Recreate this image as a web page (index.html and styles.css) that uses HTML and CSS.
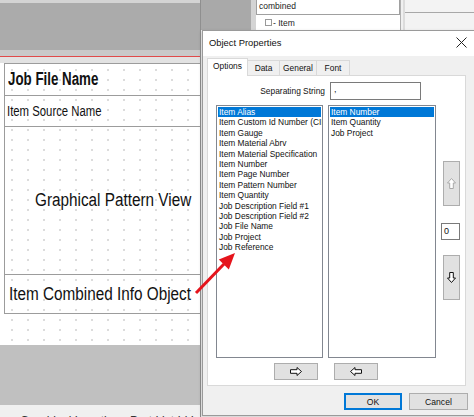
FILE: index.html
```html
<!DOCTYPE html>
<html>
<head>
<meta charset="utf-8">
<link rel="stylesheet" href="styles.css">
</head>
<body>
<div class="screen">
  <div class="canvas">
    <div class="top-line"></div>
    <div class="top-band"></div>
    <div class="band-light"></div>
    <div class="red-line"></div>
    <div class="band-under"></div>
    <div class="page">
      <div class="report">
        <div class="row row-1"><span class="narrow bold">Job File Name</span></div>
        <div class="row row-2"><span class="narrow small">Item Source Name</span></div>
        <div class="row row-3"><span class="narrow big">Graphical Pattern View</span></div>
        <div class="row row-4"><span class="narrow big">Item Combined Info Object</span></div>
      </div>
    </div>
    <div class="bottom-gray"></div>
    <div class="status"><span class="status-text">Graphical Location&nbsp;&nbsp; Part List Id Label</span></div>
  </div>
  <div class="side">
    <div class="side-top">
      <div class="gap-strip"></div>
      <div class="tree">
        <div class="tree-box">combined</div>
        <div class="tree-node"><span class="minus-box"></span><span>- Item</span></div>
      </div>
      <div class="right-panel"><div class="rp-line"></div></div>
    </div>
  </div>

  <div class="dialog">
    <div class="titlebar">
      <span class="title">Object Properties</span>
      <svg class="close" width="11" height="11" viewBox="0 0 11 11"><path d="M0.5 0.5 L10.5 10.5 M10.5 0.5 L0.5 10.5" stroke="#222" stroke-width="1"/></svg>
    </div>
    <div class="tabs">
      <div class="tab active">Options</div>
      <div class="tab">Data</div>
      <div class="tab">General</div>
      <div class="tab">Font</div>
    </div>
    <div class="panel">
      <div class="sep-row">
        <span class="sep-label">Separating String</span>
        <div class="sep-input">,</div>
      </div>
      <div class="lists">
        <div class="listbox">
          <div class="item sel">Item Alias</div>
          <div class="item">Item Custom Id Number (CID)</div>
          <div class="item">Item Gauge</div>
          <div class="item">Item Material Abrv</div>
          <div class="item">Item Material Specification</div>
          <div class="item">Item Number</div>
          <div class="item">Item Page Number</div>
          <div class="item">Item Pattern Number</div>
          <div class="item">Item Quantity</div>
          <div class="item">Job Description Field #1</div>
          <div class="item">Job Description Field #2</div>
          <div class="item">Job File Name</div>
          <div class="item">Job Project</div>
          <div class="item">Job Reference</div>
        </div>
        <div class="listbox right">
          <div class="item sel">Item Number</div>
          <div class="item">Item Quantity</div>
          <div class="item">Job Project</div>
        </div>
        <div class="order">
          <div class="btn tall"><svg width="9" height="11" viewBox="0 0 9 11"><path d="M4.5 0.5 L8.5 5 H6.3 V10.5 H2.7 V5 H0.5 Z" fill="#fff" stroke="#a8a8a8" stroke-width="1"/></svg></div>
          <div class="num">0</div>
          <div class="btn tall"><svg width="9" height="11" viewBox="0 0 9 11"><path d="M4.5 10.5 L8.5 6 H6.3 V0.5 H2.7 V6 H0.5 Z" fill="#fff" stroke="#111" stroke-width="1"/></svg></div>
        </div>
      </div>
      <div class="move-row">
        <div class="btn move"><svg width="12" height="9" viewBox="0 0 12 9"><path d="M11.5 4.5 L7 0.5 V2.7 H0.5 V6.3 H7 V8.5 Z" fill="#fff" stroke="#111" stroke-width="1"/></svg></div>
        <div class="btn move"><svg width="12" height="9" viewBox="0 0 12 9"><path d="M0.5 4.5 L5 0.5 V2.7 H11.5 V6.3 H5 V8.5 Z" fill="#fff" stroke="#111" stroke-width="1"/></svg></div>
      </div>
    </div>
    <div class="footer">
      <div class="btn dlg ok">OK</div>
      <div class="btn dlg">Cancel</div>
    </div>
  </div>

  <svg class="pointer" width="474" height="417" viewBox="0 0 474 417">
    <line x1="196" y1="293" x2="224" y2="264" stroke="#e5141c" stroke-width="3"/>
    <polygon points="235,253 228.8,269.4 218.8,259.6" fill="#e5141c"/>
  </svg>
</div>
</body>
</html>
```
FILE: styles.css
```css
html, body {
  margin: 0;
  padding: 0;
}
body {
  width: 474px;
  height: 417px;
  overflow: hidden;
  background: #f0f0f0;
  font-family: "Liberation Sans", Arial, sans-serif;
}
.screen {
  position: relative;
  width: 474px;
  height: 417px;
  display: flex;
  overflow: hidden;
}
.canvas {
  width: 200px;
  flex: none;
  display: flex;
  flex-direction: column;
  border-right: 1px solid #8f8f8f;
}
.top-line { height: 3px; background: #d4d4d4; }
.top-band { height: 47px; background: #ababab; }
.band-light { height: 6px; background: #c9c9c9; }
.red-line { height: 1px; background: #e04a4a; }
.band-under { height: 6px; background: #e2e2e2; }
.page {
  height: 282px;
  background-color: #fff;
  background-image: radial-gradient(circle, #c8c8c8 0.6px, transparent 0.9px);
  background-size: 16px 10px;
  background-position: 4px 2px;
  padding-left: 4px;
}
.report {
  border-left: 1px solid #9c9c9c;
  border-top: 1px solid #9c9c9c;
}
.row {
  border-bottom: 1px solid #9c9c9c;
  display: flex;
  align-items: center;
  color: #111;
  white-space: nowrap;
}
.row-1 { height: 31px; padding-left: 3px; }
.row-2 { height: 30px; padding-left: 2px; }
.row-3 { height: 147px; padding-left: 30px; }
.row-4 { height: 38px; padding-left: 4px; }
.narrow {
  display: inline-block;
  transform-origin: 0 50%;
  transform: scaleX(0.85);
}
.bold { font-weight: bold; font-size: 18px; transform: scaleX(0.74); }
.small { font-size: 14px; transform: scaleX(0.81); }
.big { font-size: 18px; }
.bottom-gray {
  height: 60px;
  background: #c0c0c0;
}
.status {
  height: 12px;
  background: #f0f0f0;
  overflow: hidden;
  position: relative;
}
.status-text {
  display: block;
  margin-top: 9px;
  padding-left: 20px;
  font-size: 12px;
  color: #333;
  white-space: nowrap;
}
.side {
  flex: 1;
  display: flex;
  flex-direction: column;
}
.side-top {
  display: flex;
  height: 30px;
}
.gap-strip {
  width: 50px;
  background: #a9a9a9;
  border-right: 5px solid #d4d4d4;
}
.tree {
  width: 144px;
  background: #fff;
  border-right: 1px solid #b0b0b0;
  font-size: 8.5px;
  color: #222;
}
.tree-box {
  height: 15px;
  border: 1px solid #a0a0a0;
  border-top: none;
  padding-left: 2px;
  line-height: 13px;
  box-sizing: border-box;
}
.tree-node {
  display: flex;
  align-items: center;
  padding-left: 9px;
  height: 15px;
}
.minus-box {
  width: 5px;
  height: 5px;
  border: 1px solid #999;
  margin-right: 1px;
}
.right-panel {
  flex: 1;
  border-left: 2px solid #dcdcdc;
  background: #f3f3f3;
  margin-left: 2px;
}
.rp-line {
  margin-top: 12px;
  border-top: 1px solid #a8a8a8;
}

/* dialog */
.dialog {
  position: absolute;
  left: 202px;
  top: 30px;
  width: 280px;
  height: 386px;
  background: #f0f0f0;
  border: 1px solid #9a9a9a;
  box-sizing: border-box;
  font-size: 8.4px;
  color: #111;
  box-shadow: -1px 1px 3px rgba(0,0,0,0.15);
}
.titlebar {
  height: 25px;
  background: #fff;
  display: flex;
  align-items: center;
  padding-left: 6px;
  position: relative;
}
.title {
  font-size: 9.4px;
  color: #111;
  margin-top: -2px;
}
.close {
  position: absolute;
  left: 253px;
  top: 6px;
}
.tabs {
  display: flex;
  align-items: flex-end;
  height: 19px;
  padding-left: 4px;
}
.tab {
  height: 15px;
  line-height: 14px;
  border: 1px solid #d9d9d9;
  border-bottom: none;
  background: #f0f0f0;
  box-sizing: border-box;
  text-align: center;
  margin-left: -1px;
  color: #111;
}
.tabs .tab:nth-child(2) { width: 33px; }
.tabs .tab:nth-child(3) { width: 38px; }
.tabs .tab:nth-child(4) { width: 34px; }
.tab.active {
  width: 41px;
  height: 18px;
  line-height: 15px;
  background: #fff;
  position: relative;
  z-index: 1;
  margin-bottom: -1px;
  margin-left: 0;
}
.panel {
  margin-left: 4px;
  width: 259px;
  height: 311px;
  background: #fff;
  border: 1px solid #d9d9d9;
  box-sizing: border-box;
  padding: 6px 0 0 8px;
}
.sep-row {
  display: flex;
  align-items: center;
  height: 18px;
}
.sep-label {
  width: 109px;
  text-align: right;
  padding-right: 5px;
}
.sep-input {
  width: 91px;
  height: 18px;
  border: 1px solid #7a7a7a;
  box-sizing: border-box;
  padding-left: 3px;
  line-height: 12px;
  font-size: 9px;
}
.lists {
  display: flex;
  margin-top: 5px;
  height: 253px;
}
.listbox {
  width: 107px;
  height: 253px;
  border: 1px solid #828790;
  box-sizing: border-box;
  padding: 1px 1px 0 1px;
  overflow: hidden;
}
.listbox.right {
  width: 108px;
  margin-left: 5px;
}
.item {
  height: 10.4px;
  line-height: 10.4px;
  white-space: nowrap;
  padding-left: 1px;
  color: #111;
}
.item.sel {
  background: #0078d7;
  color: #fff;
}
.order {
  margin-left: 5px;
  display: flex;
  flex-direction: column;
  align-items: center;
  width: 20px;
  padding-top: 56px;
}
.btn {
  background: #e1e1e1;
  border: 1px solid #adadad;
  box-sizing: border-box;
  display: flex;
  align-items: center;
  justify-content: center;
}
.btn.tall {
  width: 17px;
  height: 45px;
}
.num {
  width: 19px;
  height: 17px;
  border: 1px solid #7a7a7a;
  box-sizing: border-box;
  background: #fff;
  margin: 17px 0 15px 0;
  padding-left: 2px;
  line-height: 14px;
  font-size: 9px;
  align-self: flex-start;
}
.move-row {
  display: flex;
  margin-top: 5px;
  padding-left: 58px;
  gap: 16px;
}
.btn.move {
  width: 44px;
  height: 17px;
}
.footer {
  display: flex;
  gap: 7px;
  padding-left: 141px;
  margin-top: 7px;
}
.btn.dlg {
  width: 59px;
  height: 17px;
  font-size: 8.6px;
  color: #111;
}
.btn.ok {
  width: 58px;
  border: 1px solid #0078d7;
  box-shadow: inset 0 0 0 1px #0078d7;
}
.pointer {
  position: absolute;
  left: 0;
  top: 0;
  pointer-events: none;
}
```
